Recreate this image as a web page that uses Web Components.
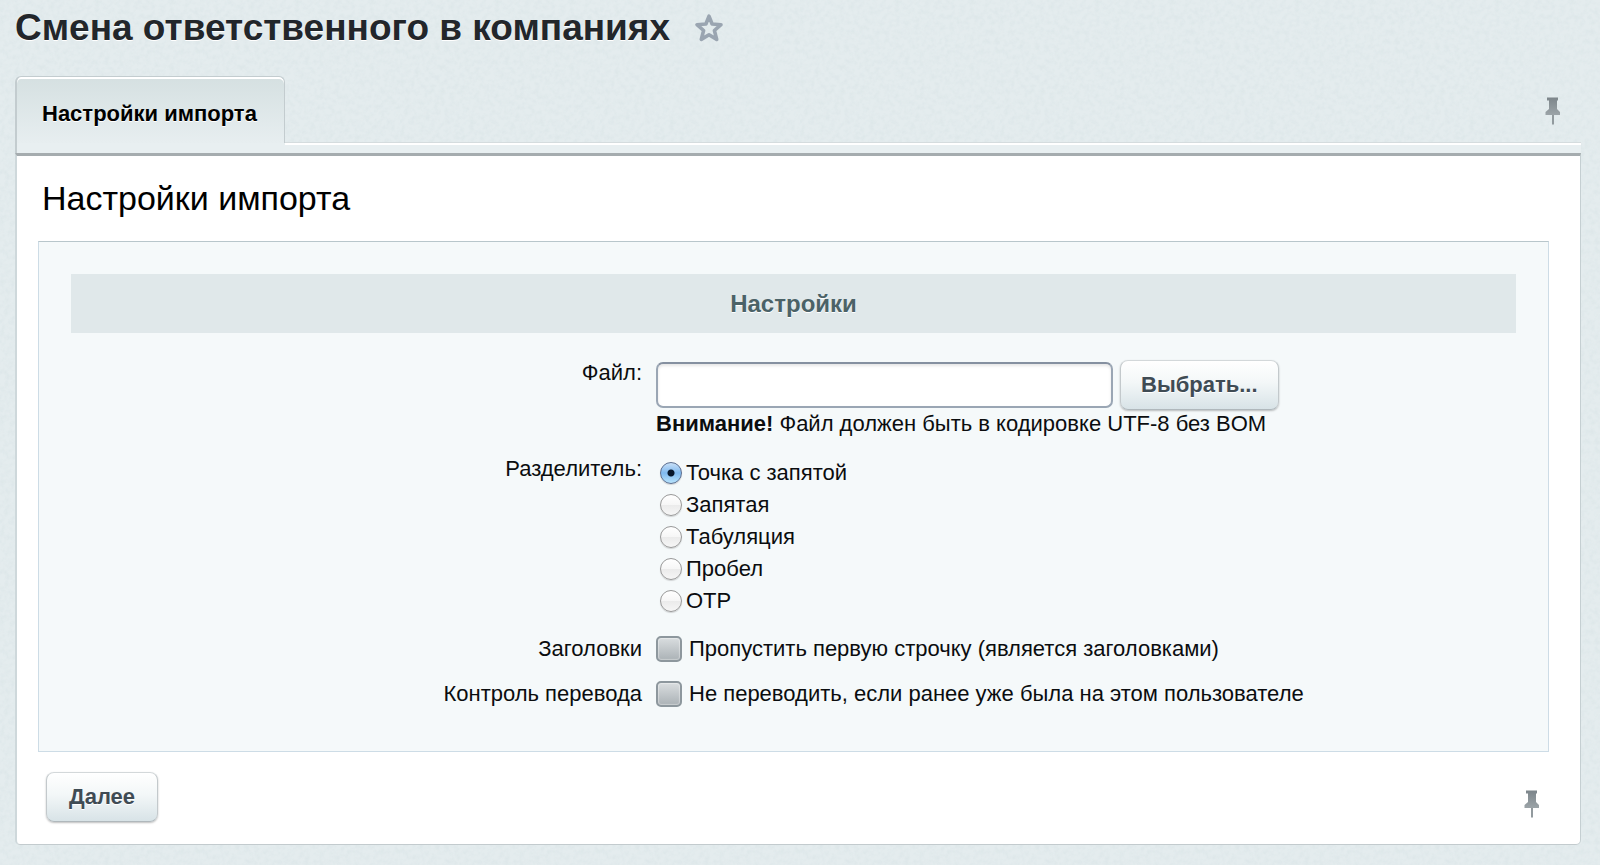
<!DOCTYPE html>
<html lang="ru">
<head>
<meta charset="utf-8">
<meta name="viewport" content="width=device-width, initial-scale=1">
<title>Смена ответственного в компаниях</title>
<style>
  html { min-height: 100%; background: #e1e9eb; }
  body {
    margin: 0;
    font: 22px/26px "Liberation Sans", Arial, sans-serif;
    color: #0b0d0f;
  }
</style>
</head>
<body>
<admin-page>
  <page-title slot="title">Смена ответственного в компаниях</page-title>
  <tab-panel>
    <span slot="tab">Настройки импорта</span>
    <span slot="heading">Настройки импорта</span>
    <import-settings></import-settings>
  </tab-panel>
</admin-page>

<script>
const define = (name, html) => {
  const template = document.createElement('template');
  template.innerHTML = html;
  customElements.define(name, class extends HTMLElement {
    constructor() {
      super();
      this.attachShadow({ mode: 'open' }).append(template.content.cloneNode(true));
    }
  });
};

define('admin-page', `
  <style>
    :host {
      display: block;
      box-sizing: border-box;
      min-height: 100vh;
      padding: 8px 19px 19px 15px;
      background: url("data:image/svg+xml,%3Csvg xmlns='http://www.w3.org/2000/svg' width='200' height='200'%3E%3Cfilter id='n'%3E%3CfeTurbulence type='fractalNoise' baseFrequency='.2' numOctaves='2' stitchTiles='stitch'/%3E%3CfeColorMatrix values='0 0 0 0 .6 0 0 0 0 .7 0 0 0 0 .72 .8 0 0 0 -.3'/%3E%3C/filter%3E%3Crect width='200' height='200' filter='url(%23n)' opacity='.7'/%3E%3C/svg%3E") #e4ecee;
    }
    main { margin-top: 28px; }
  </style>
  <slot name="title"></slot>
  <main><slot></slot></main>
`);

define('page-title', `
  <style>
    :host { display: flex; align-items: center; gap: 24px; }
    h1 { margin: 0; font-size: 37px; line-height: 40px; color: #22262b; text-shadow: 0 1px #fff; }
    button { display: block; margin: 0; padding: 0; border: 0; background: none; }
    svg { display: block; }
  </style>
  <h1><slot></slot></h1>
  <button type="button" aria-label="Добавить в избранное">
    <svg width="30" height="30" viewBox="0 0 30 30"><path d="M15 3.2 L18.1 11 L27 11.7 L20.4 17.5 L22.7 26.4 L15 21.7 L7.3 26.4 L9.6 17.5 L3 11.7 L11.9 11 Z" fill="none" stroke="#9aa5b1" stroke-width="3.6" stroke-linejoin="round"/></svg>
  </button>
`);

define('pin-button', `
  <style>
    :host { display: block; }
    button { display: block; padding: 0; border: 0; background: none; }
    svg { display: block; }
  </style>
  <button type="button" aria-label="Закрепить">
    <svg width="16" height="28" viewBox="0 0 16 28">
      <defs><linearGradient id="g" x2="0" y2="1"><stop stop-color="#7c858a"/><stop offset="1" stop-color="#9ca4a8"/></linearGradient></defs>
      <path d="M2 .5 H13 V3.5 H12 V12 L15 15 V18 H.5 V15 L4 12 V3.5 H2 Z" fill="url(#g)"/>
      <path d="M7 18 H9 V27.5 H7 Z" fill="#929a9e"/>
    </svg>
  </button>
`);

define('push-button', `
  <style>
    :host { display: block; }
    button {
      display: block;
      height: 50px;
      padding: 0 var(--button-padding, 22px);
      border: 1px solid;
      border-color: #d3d8da #c3c9cc #b0b8bc;
      border-radius: 8px;
      background: linear-gradient(#fff, #f3f7f8 45%, #d8e3e7);
      box-shadow: 0 1px 2px rgba(0, 0, 0, .25), inset 0 1px #fff;
      font: bold 22px/26px "Liberation Sans", Arial, sans-serif;
      color: #3f4b54;
      text-shadow: 0 1px #fff;
      white-space: nowrap;
    }
  </style>
  <button type="button"><slot></slot></button>
`);

define('tab-panel', `
  <style>
    :host { display: block; }
    header { display: flex; justify-content: space-between; align-items: stretch; }
    .tab {
      box-sizing: border-box;
      height: 67px;
      padding: 24px 27px 0 25px;
      border: 1px solid #c3cccf;
      border-left-width: 2px;
      border-bottom: 0;
      border-radius: 6px 6px 0 0;
      background: linear-gradient(#d5e0e1, #e7eef0);
      box-shadow: inset 0 2px #fff;
      font: bold 22px/26px "Liberation Sans", Arial, sans-serif;
      color: #000;
      text-shadow: 0 1px #fff;
    }
    .rest {
      flex: 1;
      display: flex;
      justify-content: flex-end;
      padding: 21px 20px 0 0;
      border-bottom: 1px solid #d5dcde;
    }
    .strip {
      box-sizing: border-box;
      height: 10px;
      border-left: 2px solid #c3cccf;
      background: #e8eff1;
    }
    .strip::before { content: ""; display: block; height: 2px; margin-left: 268px; background: #fff; }
    .body {
      padding: 26px 31px 22px 21px;
      border: 1px solid #c5cfd2;
      border-left: 2px solid #ced8db;
      border-top: 3px solid #a5acaf;
      border-bottom-color: #c3cbce;
      border-radius: 0 0 5px 5px;
      background: #fff;
    }
    h2 { margin: 0 4px 27px; font-size: 34px; font-weight: 400; line-height: 32px; color: #000; }
    footer { display: flex; justify-content: space-between; padding: 20px 9px 0 8px; }
    footer pin-button { margin-top: 18px; }
  </style>
  <header>
    <div class="tab"><slot name="tab"></slot></div>
    <div class="rest"><pin-button></pin-button></div>
  </header>
  <div class="strip"></div>
  <div class="body">
    <h2><slot name="heading"></slot></h2>
    <slot></slot>
    <footer><push-button>Далее</push-button><pin-button></pin-button></footer>
  </div>
`);

define('field-row', `
  <style>
    :host { display: grid; grid-template-columns: 2fr 3fr; margin-top: 19px; }
    .label { padding-right: 7px; text-align: right; }
    .field { padding-left: 7px; min-width: 0; }
  </style>
  <div class="label"><slot name="label"></slot></div>
  <div class="field"><slot></slot></div>
`);

define('import-settings', `
  <style>
    :host {
      display: block;
      padding: 32px 32px 44px;
      border: 1px solid #cddce6;
      border-top-color: #b8c6cb;
      background: #f5f9fa;
    }
    h3 {
      margin: 0 0 27px;
      padding: 17px 0 16px;
      background: #e0e8ea;
      font-size: 24px;
      line-height: 26px;
      text-align: center;
      color: #4b6267;
      text-shadow: 0 1px #fff;
    }
    h3 + field-row { margin-top: 0; }
    .file { display: flex; align-items: center; gap: 7px; --button-padding: 20px; }
    [role="radiogroup"] { padding-top: 1px; }
    input { margin: 0; appearance: none; box-sizing: border-box; flex: none; }
    input[type="text"] {
      width: 457px;
      height: 46px;
      padding: 0 8px;
      border: 2px solid #9aa6b4;
      border-top-color: #8590a0;
      border-radius: 7px;
      background: #fff;
      box-shadow: inset 0 2px 3px rgba(0, 0, 0, .1);
      font: inherit;
    }
    p { margin: 1px 0 0; }
    .choice { display: flex; align-items: center; height: 32px; padding-left: 4px; gap: 4px; }
    input[type="radio"] {
      width: 22px;
      height: 22px;
      border: 1px solid #999;
      border-radius: 50%;
      background: linear-gradient(#fff, #f6f6f6 50%, #ebebeb 51%, #f6f6f6);
      box-shadow: 0 1px 1px rgba(0, 0, 0, .15);
    }
    input[type="radio"]:checked {
      border-color: #5c6e8f;
      background: radial-gradient(circle, #07162b 3px, transparent 4px), linear-gradient(#c8e0f7, #7fb9f0 50%, #b9e3fc);
    }
    .check { display: flex; align-items: center; height: 26px; gap: 7px; }
    input[type="checkbox"] {
      width: 26px;
      height: 26px;
      border: 2px solid #8d979d;
      border-radius: 5px;
      background: linear-gradient(#d9dddf, #abb2b6);
      box-shadow: inset 0 0 1px 1px rgba(255, 255, 255, .35);
    }
  </style>
  <h3>Настройки</h3>
  <field-row>
    <label slot="label" for="file">Файл:</label>
    <div class="file"><input type="text" id="file"><push-button>Выбрать...</push-button></div>
    <p><b>Внимание!</b> Файл должен быть в кодировке UTF-8 без BOM</p>
  </field-row>
  <field-row>
    <span slot="label" id="separator">Разделитель:</span>
    <div role="radiogroup" aria-labelledby="separator">
      <div class="choice"><input type="radio" name="sep" id="s1" checked><label for="s1">Точка с запятой</label></div>
      <div class="choice"><input type="radio" name="sep" id="s2"><label for="s2">Запятая</label></div>
      <div class="choice"><input type="radio" name="sep" id="s3"><label for="s3">Табуляция</label></div>
      <div class="choice"><input type="radio" name="sep" id="s4"><label for="s4">Пробел</label></div>
      <div class="choice"><input type="radio" name="sep" id="s5"><label for="s5">ОТР</label></div>
    </div>
  </field-row>
  <field-row>
    <span slot="label">Заголовки</span>
    <div class="check"><input type="checkbox" id="skip"><label for="skip">Пропустить первую строчку (является заголовками)</label></div>
  </field-row>
  <field-row>
    <span slot="label">Контроль перевода</span>
    <div class="check"><input type="checkbox" id="keep"><label for="keep">Не переводить, если ранее уже была на этом пользователе</label></div>
  </field-row>
`);
</script>
</body>
</html>
